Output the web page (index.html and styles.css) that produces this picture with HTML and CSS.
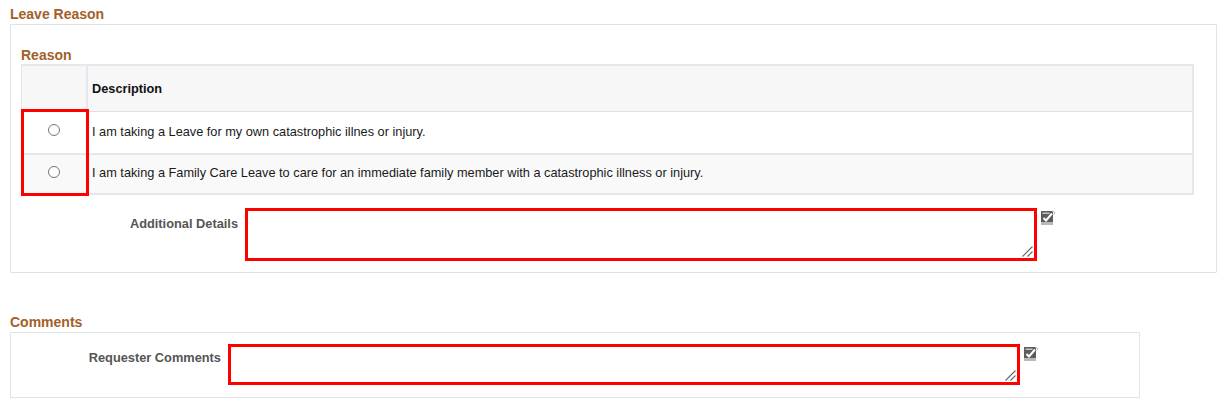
FILE: index.html
```html
<!DOCTYPE html>
<html lang="en">
<head>
<meta charset="utf-8">
<title>Leave Reason</title>
<link rel="stylesheet" href="styles.css">
</head>
<body>
<section class="group group-reason">
  <h2 class="title">Leave Reason</h2>
  <div class="box box-reason">
    <h3 class="title sub">Reason</h3>
    <div class="grid-wrap">
      <table class="grid">
        <thead>
          <tr><th class="sel"></th><th class="desc">Description</th></tr>
        </thead>
        <tbody>
          <tr class="row-a"><td class="sel"><input type="radio" name="reason" class="radio" aria-label="Own illness"></td><td class="desc">I am taking a Leave for my own catastrophic illnes or injury.</td></tr>
          <tr class="row-b"><td class="sel"><input type="radio" name="reason" class="radio" aria-label="Family care"></td><td class="desc">I am taking a Family Care Leave to care for an immediate family member with a catastrophic illness or injury.</td></tr>
        </tbody>
      </table>
      <div class="mark"></div>
    </div>
    <div class="field field-details">
      <label class="label" for="details">Additional Details</label>
      <span class="area-wrap">
        <textarea id="details" class="area area-details"></textarea>
        <svg class="grip" width="11" height="11" viewBox="0 0 11 11" aria-hidden="true"><path d="M0.5 10.5L10.5 0.5M5.5 10.5L10.5 5.5" stroke="#666" stroke-width="1.1" fill="none"/></svg>
      </span>
      <svg class="spell" width="16" height="16" viewBox="0 0 16 16" aria-hidden="true">
        <rect x="1" y="1" width="12" height="14" fill="#5c5c5c"/>
        <rect x="1" y="12" width="12" height="3" fill="#b8b8b8"/>
        <rect x="2.5" y="2.5" width="7" height="1.5" fill="#c4c4c4"/>
        <path d="M3.5 8l2.5 2.5 6-7" fill="none" stroke="#fff" stroke-width="2"/>
        <path d="M12 1l3 1.5-1.5 2.5" fill="none" stroke="#bdbdbd" stroke-width="1"/>
      </svg>
    </div>
  </div>
</section>
<section class="group group-comments">
  <h2 class="title">Comments</h2>
  <div class="box box-comments">
    <div class="field field-comments">
      <label class="label" for="comments">Requester Comments</label>
      <span class="area-wrap">
        <textarea id="comments" class="area area-comments"></textarea>
        <svg class="grip" width="11" height="11" viewBox="0 0 11 11" aria-hidden="true"><path d="M0.5 10.5L10.5 0.5M5.5 10.5L10.5 5.5" stroke="#666" stroke-width="1.1" fill="none"/></svg>
      </span>
      <svg class="spell" width="16" height="16" viewBox="0 0 16 16" aria-hidden="true">
        <rect x="1" y="1" width="12" height="14" fill="#5c5c5c"/>
        <rect x="1" y="12" width="12" height="3" fill="#b8b8b8"/>
        <rect x="2.5" y="2.5" width="7" height="1.5" fill="#c4c4c4"/>
        <path d="M3.5 8l2.5 2.5 6-7" fill="none" stroke="#fff" stroke-width="2"/>
        <path d="M12 1l3 1.5-1.5 2.5" fill="none" stroke="#bdbdbd" stroke-width="1"/>
      </svg>
    </div>
  </div>
</section>
</body>
</html>
```
FILE: styles.css
```css
* { box-sizing: border-box; }
html, body { margin: 0; padding: 0; background: #fff; }
body {
  width: 1220px;
  height: 406px;
  overflow: hidden;
  font-family: "Liberation Sans", Arial, sans-serif;
  font-size: 12.75px;
  color: #1a1a1a;
  padding: 7px 0 0 10px;
}
.title {
  margin: 0;
  font-size: 14px;
  line-height: 15px;
  font-weight: 700;
  color: #a2602a;
}
.group-reason .title { margin-bottom: 2px; }
.group-reason .sub { margin-bottom: 1px; }
.group-comments { margin-top: 42px; }
.group-comments .title { margin-bottom: 2px; }
.box {
  border: 1px solid #dfe2e7;
  border-radius: 1px;
  background: #fff;
}
.box-reason {
  width: 1207px;
  height: 249px;
  padding: 23px 0 0 10px;
}
.box-comments {
  width: 1130px;
  height: 66px;
}
.grid-wrap {
  position: relative;
  width: 1173px;
}
.grid {
  width: 100%;
  border-collapse: separate;
  border-spacing: 0;
  border: 2px solid #e4e7eb;
  border-left-width: 1px;
}
.grid th, .grid td { padding: 0 0 0 4px; text-align: left; }
.grid th {
  height: 46px;
  background: #f7f7f7;
  border-bottom: 1px solid #dcdfe4;
  font-weight: 700;
  color: #111;
}
.row-a td { height: 43px; background: #fff; border-bottom: 2px solid #e4e7eb; }
.row-b td { height: 38px; background: #f9f9f9; }
.grid .row-a td { padding-bottom: 2px; }
.grid .row-b td { padding-bottom: 3px; }
.grid .sel { width: 66px; padding-left: 0; text-align: center; border-right: 2px solid #e4e7eb; }
.radio { display: block; margin: 0 auto; width: 12px; height: 12px; }
.row-a .radio { margin-top: -3px; }
.row-b .radio { margin-top: -1px; }
.mark {
  position: absolute;
  left: 0;
  top: 45px;
  width: 68px;
  height: 87px;
  border: 3px solid #f00;
}
.field { display: flex; align-items: flex-start; }
.field-details { margin: 13px 0 0 -10px; }
.field-comments { margin: 11px 0 0 0; }
.label {
  text-align: right;
  font-size: 12.8px;
  font-weight: 700;
  color: #555;
  line-height: 15px;
  margin-right: 7px;
}
.field-details .label { width: 227px; padding-top: 8px; }
.field-comments .label { width: 210px; padding-top: 6px; }
.area-wrap { position: relative; display: block; flex: none; }
.area {
  display: block;
  margin: 0;
  padding: 2px;
  border: 3px solid #f00;
  border-radius: 0;
  background: #fff;
  outline: none;
  resize: none;
}
.area-details { width: 792px; height: 53px; }
.area-comments { width: 792px; height: 41px; }
.grip { position: absolute; right: 4px; bottom: 4px; }
.spell { margin: 2px 0 0 3px; flex: none; }
```
